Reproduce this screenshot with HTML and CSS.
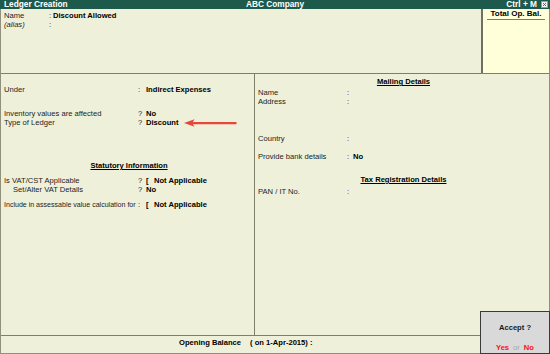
FILE: index.html
```html
<!DOCTYPE html>
<html>
<head>
<meta charset="utf-8">
<link rel="stylesheet" href="styles.css">
</head>
<body>
<div class="window">
  <div class="titlebar">
    <div class="tb-left">Ledger Creation</div>
    <div class="tb-center">ABC Company</div>
    <div class="tb-right">Ctrl + M
      <svg class="close" width="7" height="7" viewBox="0 0 7 7"><rect x="0.5" y="0.5" width="6" height="6" fill="#f4f4f4" stroke="#9a9a9a"/><path d="M2 2 L5 5 M5 2 L2 5" stroke="#555" stroke-width="0.9"/></svg>
    </div>
  </div>
  <div class="frame">
    <div class="top">
      <div class="top-main">
        <div class="row name-row"><span class="lbl">Name</span><span class="sep">:</span><span class="val">Discount Allowed</span></div>
        <div class="row name-row"><span class="lbl alias">(alias)</span><span class="sep">:</span><span class="val"></span></div>
      </div>
      <div class="opbal"><div class="opbal-title">Total Op. Bal.</div></div>
    </div>
    <div class="middle">
      <div class="pane pane-left">
        <div class="row lrow r-under"><span class="lbl">Under</span><span class="sep">:</span><span class="val">Indirect Expenses</span></div>
        <div class="row lrow r-inv"><span class="lbl">Inventory values are affected</span><span class="sep">?</span><span class="val">No</span></div>
        <div class="row lrow"><span class="lbl">Type of Ledger</span><span class="sep">?</span><span class="val val-arrow">Discount
          <svg class="arrow" width="53" height="8" viewBox="0 0 53 8"><polygon points="0,4 10.5,0.3 8.8,3 52.5,3 52.5,5.2 8.8,5.2 10.5,7.8" fill="#e8453c"/></svg></span></div>
        <div class="head head-stat"><span>Statutory Information</span></div>
        <div class="row lrow"><span class="lbl">Is VAT/CST Applicable</span><span class="sep">?</span><span class="val"><span class="brk">[</span>Not Applicable</span></div>
        <div class="row lrow"><span class="lbl indent">Set/Alter VAT Details</span><span class="sep">?</span><span class="val">No</span></div>
        <div class="row lrow r-incl"><span class="lbl small">Include in assessable value calculation for</span><span class="sep">:</span><span class="val"><span class="brk">[</span>Not Applicable</span></div>
      </div>
      <div class="pane pane-right">
        <div class="head head-mail"><span>Mailing Details</span></div>
        <div class="row rrow r-name"><span class="lbl">Name</span><span class="sep">:</span><span class="val"></span></div>
        <div class="row rrow"><span class="lbl">Address</span><span class="sep">:</span><span class="val"></span></div>
        <div class="row rrow r-country"><span class="lbl">Country</span><span class="sep">:</span><span class="val"></span></div>
        <div class="row rrow r-bank"><span class="lbl">Provide bank details</span><span class="sep">:</span><span class="val">No</span></div>
        <div class="head head-tax"><span>Tax Registration Details</span></div>
        <div class="row rrow r-pan"><span class="lbl">PAN / IT No.</span><span class="sep">:</span><span class="val"></span></div>
      </div>
    </div>
    <div class="bottom">
      <span class="ob-label">Opening Balance</span>
      <span class="ob-date">( on 1-Apr-2015) :</span>
    </div>
  </div>
  <div class="accept">
    <div class="accept-q">Accept ?</div>
    <div class="accept-opts"><span class="yn">Yes</span><span class="or">or</span><span class="yn">No</span></div>
  </div>
</div>
</body>
</html>
```

FILE: styles.css
```css
* { box-sizing: border-box; }
html, body { margin: 0; padding: 0; }
body {
  font-family: "Liberation Sans", Arial, sans-serif;
  font-size: 7.6px;
  color: #1c1c1c;
  background: #eff0d9;
}
.window {
  position: relative;
  width: 550px;
  height: 354px;
  display: flex;
  flex-direction: column;
  background: #eff0d9;
  overflow: hidden;
}
.titlebar {
  height: 9px;
  background: #1d5a4b;
  color: #ffffff;
  font-weight: bold;
  font-size: 8.3px;
  line-height: 9px;
  display: grid;
  grid-template-columns: 1fr auto 1fr;
  align-items: center;
}
.tb-left { padding-left: 4px; }
.tb-center { text-align: center; }
.tb-right {
  display: flex;
  justify-content: flex-end;
  align-items: center;
  gap: 4px;
  padding-right: 2px;
  font-size: 8.3px;
}
.close { display: block; }
.frame {
  flex: 1;
  display: flex;
  flex-direction: column;
  border-left: 1px solid #8f907e;
  border-right: 1px solid #8f907e;
  border-bottom: 1px solid #8f907e;
}
.top {
  height: 65px;
  display: flex;
  border-bottom: 1px solid #7d7e6c;
}
.top-main {
  flex: 1;
  padding-top: 2px;
  padding-left: 3px;
}
.row {
  display: grid;
  height: 9px;
  line-height: 9px;
  white-space: nowrap;
}
.name-row { grid-template-columns: 45px 4px auto; }
.val { font-weight: bold; color: #000; }
.alias { font-style: italic; }
.opbal {
  width: 68px;
  background: #ffffd9;
  border-left: 2px solid #6f7063;
  display: flex;
  justify-content: center;
  padding-top: 0;
}
.opbal-title {
  font-weight: bold;
  font-size: 8px;
  line-height: 9px;
  height: 10.5px;
  width: 58px;
  text-align: center;
  border-bottom: 1.5px solid #7a7a7a;
  color: #000;
}
.middle {
  height: 262px;
  display: flex;
  border-bottom: 1px solid #7d7e6c;
}
.pane-left {
  width: 254px;
  border-right: 1px solid #7d7e6c;
  padding: 11px 0 0 3px;
}
.pane-right {
  flex: 1;
  padding: 3px 0 0 3px;
}
.lrow { grid-template-columns: 134px 8px auto; }
.rrow { grid-template-columns: 89px 6px auto; }
.r-inv { margin-top: 15px; }
.head {
  height: 9px;
  line-height: 9px;
  text-align: center;
  font-weight: bold;
  color: #000;
}
.head span {
  text-decoration: underline;
  text-underline-offset: 1px;
}
.head-stat { margin-top: 34px; margin-bottom: 6px; }
.indent { padding-left: 9px; }
.r-incl { margin-top: 6px; }
.small { font-size: 7.05px; }
.brk { display: inline-block; width: 8px; }
.val-arrow { display: flex; align-items: center; }
.arrow { margin-left: 5.5px; display: block; }
.head-mail { margin-bottom: 2px; }
.r-country { margin-top: 28px; }
.r-bank { margin-top: 9px; }
.head-tax { margin-top: 14px; }
.r-pan { margin-top: 3px; }
.bottom {
  flex: 1;
  display: flex;
  gap: 9px;
  padding: 2px 0 0 178px;
  line-height: 9px;
  font-weight: bold;
  color: #000;
}
.accept {
  position: absolute;
  right: 0;
  bottom: 0;
  width: 70px;
  height: 43px;
  background: #d9d9d9;
  border: 1.5px solid #3a3a3a;
  display: flex;
  flex-direction: column;
  align-items: center;
  padding-top: 11px;
  font-weight: bold;
}
.accept-q { line-height: 9px; color: #1a1a1a; }
.accept-opts {
  margin-top: auto;
  margin-bottom: 1px;
  line-height: 9px;
  display: flex;
  gap: 4px;
}
.yn { color: #ff1010; }
.or { color: #a8a8a8; font-weight: normal; }
```
